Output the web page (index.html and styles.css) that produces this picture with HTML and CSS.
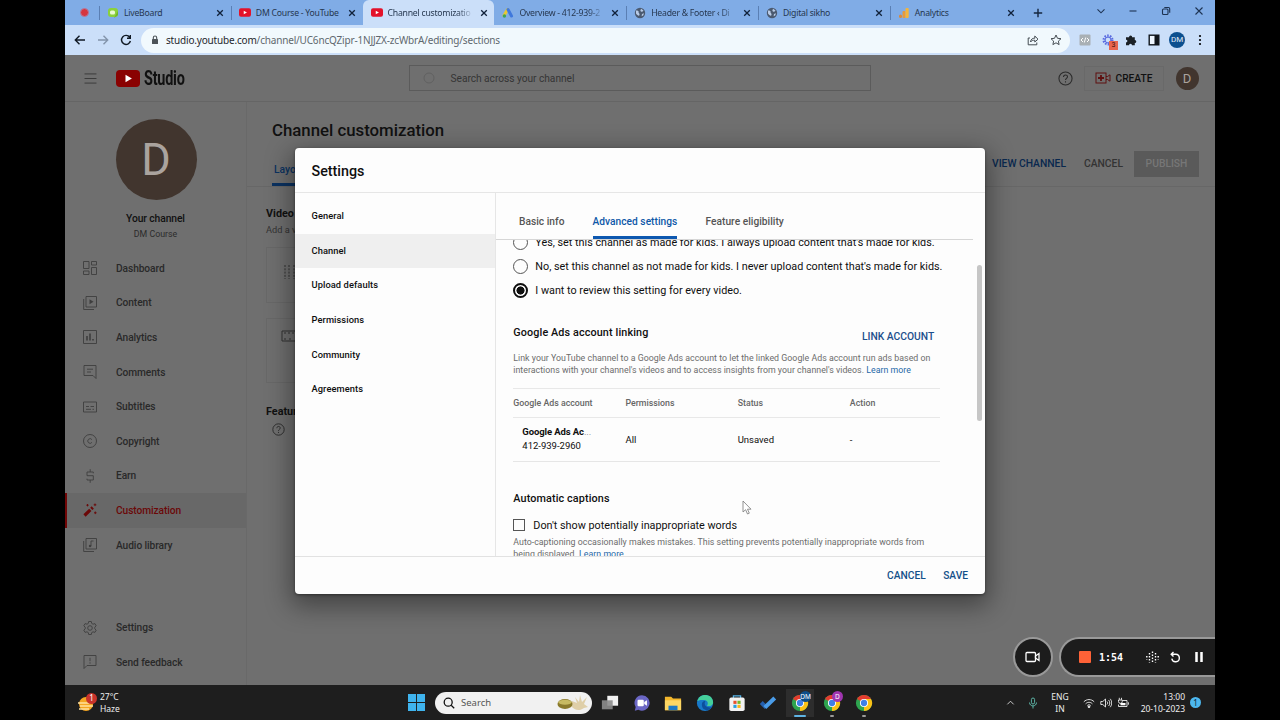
FILE: index.html
```html
<!DOCTYPE html>
<html lang="en">
<head>
  <meta charset="UTF-8">
  <meta name="viewport" content="width=device-width, initial-scale=1.0">
  <title>Channel customization - YouTube Studio</title>
  <link rel="stylesheet" href="styles.css">
</head>
<body>
  <svg class="defs" width="0" height="0">
    <symbol id="yt" viewBox="0 0 24 17"><rect width="24" height="17" rx="4"/><path d="M9.5 4.8v7.4l6.4-3.7z" class="play"/></symbol>
    <symbol id="x" viewBox="0 0 10 10"><path d="M2.2 2.2l5.6 5.6M7.8 2.2L2.2 7.8"/></symbol>
    <symbol id="globe" viewBox="0 0 12 12"><circle cx="6" cy="6" r="5.2" fill="#4b5a70"/><path d="M2 3.5c2 0 3 .6 2.600 1.600S6 6.500 5.500 8 3.500 8.500 2 6.500zM7 1.800l2.500 1.700-1.500 1.500-1.700-1zM8 7l2-.7-.8 2.200-1.600.7z" fill="#b9cbe6"/></symbol>
    <symbol id="help" viewBox="0 0 24 24"><circle cx="12" cy="12" r="10.500"/><path d="M8.800 9.600c0-4.300 6.400-4.200 6.400-.3 0 2.500-3.200 2.600-3.200 5.200M12 16.500v2"/></symbol>
    <symbol id="chrome" viewBox="0 0 20 20"><circle cx="10" cy="10" r="9" fill="#2ea44f"/><path d="M10 10L2.200 5.500A9 9 0 0 1 17.800 5.500z" fill="#e33b2e"/><path d="M10 10V5.500h7.800A9 9 0 0 1 10 19z" fill="#fbc116"/><circle cx="10" cy="10" r="4.500" fill="#fff"/><circle cx="10" cy="10" r="3.500" fill="#3f7fe8"/></symbol>
  </svg>

  <div class="screen">
    <div class="tabbar">
      <div class="pinned"><span class="rec-dot"></span></div>
      <div class="tab"><svg class="fav" viewBox="0 0 12 12"><rect x="1" y="1" width="10" height="9" rx="3" fill="#8bd13c"/><path d="M7 11l4-3V4z" fill="#6fb52a"/><rect x="3" y="3.500" width="5" height="4" rx="1.500" fill="#eaf9d2"/></svg><span class="name">LiveBoard</span><svg class="close"><use href="#x"/></svg></div>
      <div class="tab"><svg class="fav red"><use href="#yt"/></svg><span class="name">DM Course - YouTube</span><svg class="close"><use href="#x"/></svg></div>
      <div class="tab active"><svg class="fav red"><use href="#yt"/></svg><span class="name fade">Channel customizatio</span><svg class="close"><use href="#x"/></svg></div>
      <div class="tab"><svg class="fav" viewBox="0 0 12 12"><path d="M5.500 2.500L2 8.500" stroke="#e8c832" stroke-width="3" stroke-linecap="round"/><path d="M6 2.500l3.500 6.500" stroke="#3f78dc" stroke-width="3" stroke-linecap="round"/><circle cx="2.400" cy="9" r="1.700" fill="#3fa35a"/></svg><span class="name fade">Overview - 412-939-2</span><svg class="close"><use href="#x"/></svg></div>
      <div class="tab"><svg class="fav"><use href="#globe"/></svg><span class="name fade">Header &amp; Footer ‹ Di</span><svg class="close"><use href="#x"/></svg></div>
      <div class="tab"><svg class="fav"><use href="#globe"/></svg><span class="name">Digital sikho</span><svg class="close"><use href="#x"/></svg></div>
      <div class="tab"><svg class="fav" viewBox="0 0 12 12"><rect x="1" y="7.500" width="3" height="3.500" rx="1.500" fill="#d98a3c"/><rect x="4.500" y="4" width="3" height="7" rx="1" fill="#e89a3a"/><rect x="7.500" y="1" width="3.200" height="10" rx="1" fill="#f3b53c"/></svg><span class="name">Analytics</span><svg class="close"><use href="#x"/></svg></div>
      <div class="newtab"><svg viewBox="0 0 10 10"><path d="M5 .8v8.400M.8 5h8.400"/></svg></div>
      <div class="winctl">
        <svg viewBox="0 0 10 10"><path d="M1.500 3.300L5 6.800l3.500-3.500"/></svg>
        <svg viewBox="0 0 10 10"><path d="M1.500 5h7"/></svg>
        <svg viewBox="0 0 10 10"><rect x="1.500" y="3" width="5.500" height="5.500" rx="1"/><path d="M3.300 1.500H7.500q1.200 0 1.200 1.200v4"/></svg>
        <svg viewBox="0 0 10 10"><path d="M1.500 1.500l7 7M8.500 1.500l-7 7"/></svg>
      </div>
    </div>

    <div class="toolbar">
      <div class="navs">
        <svg viewBox="0 0 12 12"><path d="M11 6H1.500M5.500 1.800L1.300 6l4.200 4.200"/></svg>
        <svg viewBox="0 0 12 12" class="off"><path d="M1 6h9.500M6.500 1.800L10.700 6l-4.200 4.200"/></svg>
        <svg viewBox="0 0 12 12"><path d="M9.700 3.300A4.500 4.500 0 1 0 10.400 7M10.300 1v3.200H7"/></svg>
      </div>
      <div class="omnibox">
        <svg class="lock" viewBox="0 0 8 10"><rect x="1" y="4" width="6" height="5" rx=".6" fill="#4c5358"/><path d="M2.300 4V2.700a1.700 1.700 0 0 1 3.400 0V4" fill="none" stroke="#4c5358" stroke-width="1.100"/></svg>
        <span class="url"><b>studio.youtube.com</b>/channel/UC6ncQZipr-1NJJZX-zcWbrA/editing/sections</span>
        <svg class="omni-icon" viewBox="0 0 12 12"><path d="M3 4H1.200v6.800h8.600V8.500M3.500 8c.3-2.800 2-3.800 4.300-3.800V2L11 5.200 7.800 8V6.200C6 6.200 4.500 6.600 3.500 8z"/></svg>
        <svg class="omni-icon" viewBox="0 0 12 12"><path d="M6 1l1.500 3.300 3.500.4-2.600 2.400.7 3.500L6 8.800l-3.100 1.800.7-3.500L1 4.700l3.500-.4z"/></svg>
      </div>
      <div class="exts">
        <svg viewBox="0 0 12 12"><rect x=".5" y=".5" width="11" height="11" rx="1" fill="#a9b0b5"/><path d="M4 4L2 6l2 2M8 4l2 2-2 2M6.700 3.500l-1.400 5" stroke="#fff" fill="none"/></svg>
        <span class="gear"><svg viewBox="0 0 12 12"><circle cx="6" cy="6" r="4.200" fill="none" stroke="#5a6be0" stroke-width="2.600" stroke-dasharray="1.500 1.140"/><circle cx="6" cy="6" r="2.900" fill="none" stroke="#5a6be0"/></svg><i>3</i></span>
        <svg viewBox="0 0 12 12"><path d="M1 3.200h3a1.600 1.600 0 1 1 3.200 0h2.600V6a1.500 1.500 0 1 1 0 3v2.200H7a1.500 1.500 0 0 0-3 0H1V8.500a1.400 1.400 0 0 0 0-2.800z" fill="#1c2126"/></svg>
        <svg viewBox="0 0 12 12"><rect x="1.200" y="1.200" width="9.600" height="9.600" fill="#eef6ff" stroke="#10161c" stroke-width="1.400"/><rect x="6.500" y="1" width="4.300" height="10" fill="#10161c"/></svg>
        <span class="profile">DM</span>
        <svg viewBox="0 0 12 12"><circle cx="6" cy="2" r="1.100"/><circle cx="6" cy="6" r="1.100"/><circle cx="6" cy="10" r="1.100"/></svg>
      </div>
    </div>

    <div class="page">
      <header class="studio-head">
        <svg class="burger" viewBox="0 0 14 12"><path d="M.5 1h13M.5 6h13M.5 11h13"/></svg>
        <svg class="logo"><use href="#yt"/></svg>
        <span class="brand">Studio</span>
        <div class="search"><svg viewBox="0 0 12 12"><circle cx="6" cy="6" r="5"/></svg>Search across your channel</div>
        <svg class="help"><use href="#help"/></svg>
        <div class="create"><svg viewBox="0 0 16 12"><rect x="1" y="1" width="10" height="10"/><path d="M6 3v6M3 6h6" stroke-width="1.800"/><path d="M11 4.500h1.500L15 2.800v6.400l-2.500-1.700H11"/></svg>CREATE</div>
        <div class="avatar small">D</div>
      </header>

      <div class="cols">
        <aside class="sidebar">
          <div class="avatar big">D</div>
          <div class="your">Your channel</div>
          <div class="course">DM Course</div>
          <nav>
            <div class="item"><svg viewBox="0 0 14 14"><path d="M.5.5h5.500v7H.5zM8.500.5h5v3.500h-5zM8.500 6.500h5v7h-5zM.5 10h5.500v3.500H.5z"/></svg>Dashboard</div>
            <div class="item"><svg viewBox="0 0 14 14"><path d="M3 .5h10.500V11H3zM.7 3v10.500H11"/><path d="M6.500 3.300v5l4-2.500z" class="fill"/></svg>Content</div>
            <div class="item"><svg viewBox="0 0 14 14"><path d="M.5.5h13v13H.5z"/><path d="M4 10.500V6M7 10.500v-7M10 10.500V9" stroke-width="1.600"/></svg>Analytics</div>
            <div class="item"><svg viewBox="0 0 14 14"><path d="M1 .5h12v13l-3-3H1zM4 4.200h6M4 7h4"/></svg>Comments</div>
            <div class="item"><svg viewBox="0 0 14 14"><path d="M.5 2h13v10H.5zM3 6.500h3M7.500 6.500H11M3 9.300h5M9.500 9.300H11"/></svg>Subtitles</div>
            <div class="item"><svg viewBox="0 0 14 14"><circle cx="7" cy="7" r="6.500"/><path d="M8.900 5.600a2.300 2.300 0 1 0 0 2.800"/></svg>Copyright</div>
            <div class="item"><svg viewBox="0 0 14 14"><path d="M10.300 4.300V3H4v3.700h6.300V11H4V9.700M7.200 .2v2.800M7.200 11v2.800"/></svg>Earn</div>
            <div class="item current"><svg viewBox="0 0 14 14"><path d="M1.500 12.500L7.300 6.900M8.300 5.900l1.500-1.400" stroke-width="3.200"/><path d="M4.500 1v2.400M3.300 2.200h2.400M12 .5v2.600M10.700 1.800h2.600M12.300 8.500v2.600M11 9.800h2.600"/></svg>Customization</div>
            <div class="item"><svg viewBox="0 0 14 14"><path d="M3 .5h10.500V11H3zM.7 3v10.500H11M8 8.200V3h2.500"/><circle cx="7" cy="8" r="1.200" class="fill"/></svg>Audio library</div>
          </nav>
          <nav class="lower">
            <div class="item"><svg viewBox="0 0 14 14"><circle cx="7" cy="7" r="2.300"/><path d="M5.700.5h2.600l.4 1.900 1.300.8 1.900-.6 1.300 2.200L11.800 6.200v1.600l1.400 1.400-1.300 2.200-1.900-.6-1.300.8-.4 1.900H5.700l-.4-1.900-1.300-.8-1.900.6L.8 9.200l1.400-1.400V6.200L.8 4.800l1.300-2.200 1.900.6 1.300-.8z"/></svg>Settings</div>
            <div class="item"><svg viewBox="0 0 14 14"><path d="M1 13.500V.5h12v10H4zM7 2.800v3.400M7 7.300v1.400"/></svg>Send feedback</div>
          </nav>
        </aside>

        <main class="content">
          <h1>Channel customization</h1>
          <div class="bar">
            <span class="layout">Layout</span>
            <span class="view">VIEW CHANNEL</span>
            <span class="cancel">CANCEL</span>
            <span class="publish">PUBLISH</span>
          </div>
          <h2>Video</h2>
          <p>Add a video</p>
          <div class="card"><svg viewBox="0 0 16 16"><path d="M4 1v14M8 1v14M13 1v14" stroke-dasharray="2 1.300"/></svg></div>
          <div class="card second"><svg viewBox="0 0 16 16"><path d="M1 3h14v10H1zM3 5h2M7 5h2M11 5h2M3 11h2M8 11h2"/></svg></div>
          <h2 class="featured">Featured</h2>
          <svg class="help"><use href="#help"/></svg>
        </main>
      </div>
    </div>

    <div class="taskbar">
      <div class="weather">
        <svg viewBox="0 0 20 20"><circle cx="9" cy="11" r="7" fill="#f5a623"/><path d="M1 10h12M3 13h13M2 16h10" stroke="#ffe1a0" stroke-width="1.300"/><circle cx="14.500" cy="5.500" r="5.500" fill="#c8332b"/><text x="12.300" y="8.400">1</text></svg>
        <div>27°C<br>Haze</div>
      </div>
      <svg class="start" viewBox="0 0 18 18"><path d="M0 0h8.500v8.500H0zM9.500 0H18v8.500H9.500zM0 9.500h8.500V18H0zM9.500 9.500H18V18H9.500z" fill="#3fb4ee"/></svg>
      <div class="find">
        <svg class="glass" viewBox="0 0 12 12"><circle cx="5.200" cy="5.200" r="4"/><path d="M8.200 8.200l3 3"/></svg>
        <span>Search</span>
        <svg class="bowl" viewBox="0 0 32 18"><path d="M14 12c4 5 9 5 13 2l4-1-4-3 3-7-5 5-2-7-1 7-4-5 2 6-5-2z" fill="#dfcfa8"/><ellipse cx="8" cy="10" rx="7.500" ry="5" fill="#8a7a2c"/><ellipse cx="8" cy="8.300" rx="6.500" ry="2.500" fill="#c7ba62"/></svg>
      </div>
      <div class="apps">
        <svg viewBox="0 0 20 20"><rect x="7" y="2" width="12" height="11" fill="#f1f1f1"/><rect x="1" y="7" width="12" height="10" fill="#8c8c8c" opacity=".9"/></svg>
        <svg viewBox="0 0 20 20"><path d="M10 1.500a8.500 8.500 0 1 1-4 16L2 18.500l1-4A8.500 8.500 0 0 1 10 1.500z" fill="#6a66c4"/><rect x="5" y="6.500" width="7" height="7" rx="1.300" fill="#fff"/><path d="M12.500 9l3-2v6l-3-2z" fill="#fff"/></svg>
        <svg viewBox="0 0 20 20"><path d="M1 3h7l2 2h9v13H1z" fill="#f3b72d"/><path d="M1 7h18v11H1z" fill="#fcd663"/><path d="M5 18v-5h10v5z" fill="#1c78c4"/></svg>
        <svg viewBox="0 0 20 20"><circle cx="10" cy="10" r="9" fill="#1879c9"/><path d="M1.500 8C3 2 8 .8 11.500 1.200 17 2 19.200 6 19 10c-.3 3-4 4.200-6.800 3 2-2.500.6-6-3-6.300C5.500 6.300 3 7 1.500 8z" fill="#45cf9a"/><path d="M6.500 12c0-3 2-4.500 4-4-1.500 1.500-1.300 6 3.500 6.800 2 .3 3-.1 3.700-.6-2 4-6.700 4.500-8.700 2.800C7.300 16 6.500 14 6.500 12z" fill="#0d4f9c"/></svg>
        <svg viewBox="0 0 20 20"><path d="M6 5V2.200h8V5" fill="none" stroke="#55b4e8" stroke-width="1.400"/><rect x="1.500" y="4" width="17" height="15" rx="2" fill="#f2f2f2"/><path d="M6 7.500h3.500V11H6z" fill="#e8502c"/><path d="M10.500 7.500H14V11h-3.500z" fill="#77b828"/><path d="M6 12h3.500v3.500H6z" fill="#29a0e0"/><path d="M10.500 12H14v3.500h-3.500z" fill="#f9b81a"/></svg>
        <svg viewBox="0 0 20 20"><path d="M2.500 9.500l5.500 5.500" stroke="#245fae" stroke-width="4.500"/><path d="M6.500 15L17.500 4.500" stroke="#4a9ce8" stroke-width="4.500"/></svg>
        <span class="app on"><svg viewBox="0 0 20 20"><use href="#chrome"/></svg><i class="dm">DM</i></span>
        <span class="app"><svg viewBox="0 0 20 20"><use href="#chrome"/></svg><i class="d">D</i></span>
        <span class="app"><svg viewBox="0 0 20 20"><use href="#chrome"/></svg></span>
      </div>
      <div class="tray">
        <svg class="up" viewBox="0 0 10 10"><path d="M1.500 6.500L5 3l3.500 3.500"/></svg>
        <svg class="mic" viewBox="0 0 10 12"><rect x="3.400" y="1" width="3.200" height="6" rx="1.600"/><path d="M1.500 5.500c0 4.500 7 4.500 7 0M5 9v2.500"/></svg>
        <div class="lang">ENG<br>IN</div>
        <svg class="wifi" viewBox="0 0 12 12"><path d="M.8 4.800c3-3 7.400-3 10.400 0M2.600 6.800c2-2 4.800-2 6.800 0M4.300 8.500c1-1 2.400-1 3.400 0"/><circle cx="6" cy="9.800" r=".9" fill="#fff"/></svg>
        <svg class="vol" viewBox="0 0 12 12"><path d="M.8 4.500v3h2L5.500 10V2L2.800 4.500zM7 4.500c.8 1 .8 2 0 3M8.600 3c1.600 2 1.600 4 0 6M10.200 1.800c2 2.600 2 5.800 0 8.400"/></svg>
        <svg class="batt" viewBox="0 0 12 12"><path d="M5.500 3.500H10v6H1.500V7.500M11.400 5.300v2.400M2.300.8v2M4.500.8v2M1.500 3h3.800v1.500a1.900 1.900 0 0 1-3.800 0z"/><rect x="3.500" y="6" width="5" height="2.300" fill="#fff" stroke="none"/></svg>
        <div class="clock">13:00<br>20-10-2023</div>
        <span class="note">1</span>
      </div>
    </div>

    <div class="modal">
      <div class="modal-head">Settings</div>
      <div class="modal-mid">
        <div class="side">
          <div>General</div>
          <div class="sel">Channel</div>
          <div>Upload defaults</div>
          <div>Permissions</div>
          <div>Community</div>
          <div>Agreements</div>
        </div>
        <div class="pane">
          <div class="tabs">
            <span class="t1">Basic info</span>
            <span class="t2">Advanced settings</span>
            <span class="t3">Feature eligibility</span>
          </div>
          <div class="scroll">
            <div class="radio r1"><i></i><span>Yes, set this channel as made for kids. I always upload content that's made for kids.</span></div>
            <div class="radio"><i></i><span>No, set this channel as not made for kids. I never upload content that's made for kids.</span></div>
            <div class="radio checked"><i></i><span>I want to review this setting for every video.</span></div>
            <div class="link-row"><h3>Google Ads account linking</h3><span class="link-btn">LINK ACCOUNT</span></div>
            <p class="note-text">Link your YouTube channel to a Google Ads account to let the linked Google Ads account run ads based on<br>interactions with your channel's videos and to access insights from your channel's videos. <a>Learn more</a></p>
            <div class="grid head"><span>Google Ads account</span><span>Permissions</span><span>Status</span><span>Action</span></div>
            <div class="grid row"><span class="acct"><b>Google Ads Ac<em>...</em></b>412-939-2960</span><span>All</span><span>Unsaved</span><span>-</span></div>
            <h3 class="auto">Automatic captions</h3>
            <div class="check"><i></i><span>Don't show potentially inappropriate words</span></div>
            <p class="note-text">Auto-captioning occasionally makes mistakes. This setting prevents potentially inappropriate words from<br>being displayed. <a>Learn more</a></p>
            <div class="thumb"></div>
          </div>
        </div>
      </div>
      <div class="modal-foot"><span>CANCEL</span><span>SAVE</span></div>
    </div>

    <svg class="cursor" viewBox="0 0 10 15"><path d="M1 1v11l2.600-2.300L5.500 14l1.800-.8-1.800-4H9z"/></svg>

    <div class="cam"><svg viewBox="0 0 16 12"><rect x="1" y="1.500" width="9.500" height="9" rx="1"/><path d="M10.500 5l3.500-2.500v7L10.500 7z"/></svg></div>
    <div class="recorder">
      <span class="stop"></span>
      <span class="time">1:54</span>
      <svg class="dots" viewBox="0 0 13 13"><path d="M3.500 2v9.500M6.500 .5v12M9.500 2v9.500M.8 5v3.500M12.200 5v3.500"/></svg>
      <svg class="redo" viewBox="0 0 12 12"><path d="M2.500 3.200h4.200a3.800 3.800 0 1 1-3.900 4.500M4.500 1L2.200 3.200 4.500 5.500"/></svg>
      <svg class="pause" viewBox="0 0 10 12"><path d="M2.500 1v10M7.500 1v10"/></svg>
    </div>
  </div>
</body>
</html>
```

FILE: styles.css
```css
* {
  box-sizing: border-box;
}
body {
  margin: 0;
  background: #000;
  font-family: Roboto, "Liberation Sans", sans-serif;
  overflow: hidden;
}
.defs {
  position: absolute;
}
svg {
  flex: none;
  display: block;
}
i, em {
  font-style: normal;
}
.play {
  fill: #fff;
}
.screen {
  position: relative;
  width: 1150px;
  height: 720px;
  margin-left: 65px;
  display: flex;
  flex-direction: column;
  overflow: hidden;
}

/* browser tabs */
.tabbar {
  height: 25px;
  display: flex;
  align-items: center;
  background: #80ace6;
  font-family: "Noto Sans", sans-serif;
  font-size: 8.700px;
  letter-spacing: -.25px;
  color: #26374f;
}
.pinned {
  width: 34px;
  padding-left: 15px;
}
.rec-dot {
  display: block;
  width: 9px;
  height: 9px;
  border-radius: 50%;
  background: #d6353f;
  border: 1px solid #b77a9c;
}
.tab {
  width: 131.8px;
  height: 25px;
  display: flex;
  align-items: center;
  padding-left: 8px;
  position: relative;
}
.tab::before {
  content: "";
  position: absolute;
  left: 0;
  top: 6px;
  width: 1px;
  height: 14px;
  background: #5a7fb4;
}
.tab.active::before, .tab.active + .tab::before {
  display: none;
}
.fav {
  width: 12px;
  height: 12px;
  fill: none;
}
.fav.red {
  fill: #e3122a;
  height: 9px;
}
.name {
  width: 87px;
  margin-left: 5px;
  white-space: nowrap;
}
.fade {
  mask-image: linear-gradient(90deg, #000 80%, transparent 98%);
}
.close {
  width: 10px;
  height: 10px;
  margin-left: 4px;
  stroke: #10213a;
  stroke-width: 1.3;
}
.tab.active {
  background: #cbdff9;
  border-radius: 6px 6px 0 0;
}
.newtab {
  width: 32px;
  padding-left: 11px;
}
.newtab svg {
  width: 10px;
  stroke: #14263f;
  stroke-width: 1.4;
}
.winctl {
  display: flex;
  gap: 22.700px;
  margin: -4px 0 0 42px;
}
.winctl svg {
  width: 10px;
  height: 10px;
  fill: none;
  stroke: #1d3352;
  stroke-width: 1.1;
}

/* address bar */
.toolbar {
  height: 30px;
  display: flex;
  align-items: center;
  background: #cbdff9;
}
.navs {
  width: 76px;
  padding-left: 9px;
  display: flex;
  gap: 11px;
}
.navs svg {
  width: 12px;
  fill: none;
  stroke: #101923;
  stroke-width: 1.4;
}
.navs .off {
  stroke: #8394ab;
}
.omnibox {
  width: 929px;
  height: 25px;
  border-radius: 13px;
  background: #f1f9fd;
  display: flex;
  align-items: center;
  padding: 0 8px 0 10px;
}
.lock {
  width: 8px;
  height: 10px;
}
.url {
  flex: 1;
  margin-left: 7px;
  font-family: "Noto Sans", sans-serif;
  font-size: 10px;
  letter-spacing: -.18px;
  color: #5f686e;
}
.url b {
  font-weight: 400;
  color: #1f272c;
}
.omni-icon {
  width: 12px;
  margin-left: 11px;
  fill: none;
  stroke: #454d53;
}
.exts {
  display: flex;
  align-items: center;
  gap: 11px;
  margin-left: 9px;
}
.exts svg {
  width: 12px;
  height: 12px;
}
.gear {
  position: relative;
}
.gear i {
  position: absolute;
  left: 7px;
  top: 7px;
  width: 9px;
  height: 9px;
  background: #e8654f;
  color: #38130f;
  font-size: 7px;
  line-height: 9px;
  text-align: center;
}
.profile {
  width: 16px;
  height: 16px;
  margin: 0 -2px;
  border-radius: 50%;
  background: #0b4f8f;
  color: #e2edf7;
  font-size: 8px;
  line-height: 16px;
  text-align: center;
}

/* dimmed studio page */
.page {
  height: 630px;
  background: #6f6f6f;
  color: #111;
}
.studio-head {
  height: 47px;
  display: flex;
  align-items: center;
  border-bottom: 1px solid #656565;
}
.burger {
  width: 13px;
  height: 11px;
  margin-left: 18.500px;
  stroke: #373737;
}
.logo {
  width: 24px;
  height: 17px;
  margin-left: 19px;
  fill: #8a0202;
}
.logo + .brand {
  width: 42px;
  margin-left: 4px;
  font-weight: 700;
  font-size: 19.500px;
  letter-spacing: -.3px;
  transform: scaleX(.74);
  transform-origin: left;
}
.search {
  width: 462px;
  height: 26px;
  margin-left: 223px;
  border: 1px solid #5b5b5b;
  display: flex;
  align-items: center;
  font-size: 10.200px;
  letter-spacing: -.03px;
  color: #353535;
}
.search svg {
  width: 12px;
  margin: 0 16px 0 13px;
  fill: none;
  stroke: #616161;
}
.help {
  width: 15px;
  height: 15px;
  fill: none;
  stroke: #2b2b2b;
  stroke-width: 1.7;
}
.studio-head .help {
  margin-left: 187px;
}
.create {
  width: 80px;
  height: 25px;
  margin-left: 11px;
  border: 1px solid #696969;
  display: flex;
  align-items: center;
  justify-content: center;
  gap: 5px;
  font-size: 10.200px;
  font-weight: 500;
}
.create svg {
  width: 16px;
  fill: none;
  stroke: #5f1010;
}
.avatar {
  border-radius: 50%;
  background: #41352e;
  color: #aaa39e;
  text-align: center;
}
.small {
  width: 23px;
  height: 23px;
  margin-left: 12px;
  font-size: 13px;
  line-height: 23px;
}
.cols {
  display: flex;
  height: 583px;
}
.sidebar {
  width: 182px;
  border-right: 1px solid #696969;
  font-weight: 500;
}
.big {
  width: 81px;
  height: 81px;
  margin: 16.500px 0 0 50.500px;
  font-size: 45px;
  font-weight: 400;
  line-height: 81px;
}
.your {
  margin-top: 12.500px;
  text-align: center;
  font-size: 10.300px;
  line-height: 14px;
  letter-spacing: -.1px;
}
.course {
  margin-top: 2px;
  text-align: center;
  font-size: 8.800px;
  line-height: 12px;
  font-weight: 400;
  color: #2c2c2c;
}
.sidebar nav {
  margin-top: 11px;
}
.item {
  height: 34.600px;
  display: flex;
  align-items: center;
  gap: 19px;
  padding-left: 18px;
  font-size: 10.200px;
  letter-spacing: -.08px;
  color: #292929;
}
.item svg {
  width: 14px;
  height: 14px;
  fill: none;
  stroke: #3e3e3e;
  stroke-width: .9;
}
.item .fill {
  fill: #3e3e3e;
  stroke: none;
}
.item.current {
  background: #686868;
  border-left: 2px solid #700606;
  padding-left: 16px;
  color: #6b0808;
}
.item.current svg {
  stroke: #6b0808;
}
.sidebar .lower {
  margin-top: 48px;
}
.content {
  flex: 1;
}
h1 {
  margin: 18px 0 0 25px;
  font-size: 16.800px;
  line-height: 20px;
  font-weight: 500;
}
.bar {
  height: 47px;
  display: flex;
  align-items: center;
  padding-top: 1px;
  border-bottom: 1px solid #676767;
  font-size: 10.3px;
  font-weight: 500;
}
.layout {
  width: 60px;
  height: 100%;
  margin-left: 25px;
  padding: 22px 0 0 2px;
  border-bottom: 3px solid #0b3261;
  color: #0b3261;
}
.view {
  width: 92px;
  margin-left: 660px;
  color: #09284e;
}
.cancel {
  width: 50px;
  color: #333;
}
.publish {
  width: 65px;
  height: 26px;
  line-height: 26px;
  text-align: center;
  background: #5a5a5a;
  color: #777;
}
h2 {
  margin: 19.500px 0 0 19px;
  font-size: 10.800px;
  line-height: 14px;
  font-weight: 700;
}
.content p {
  margin: 3px 0 0 19px;
  font-size: 9.200px;
  line-height: 12px;
  color: #333;
}
.card {
  width: 700px;
  height: 56px;
  margin: 11px 0 0 19px;
  border: 1px solid #686868;
  padding: 16px 0 0 14px;
}
.card svg {
  width: 16px;
  height: 16px;
  fill: none;
  stroke: #333;
}
.card.second {
  height: 65px;
  margin-top: 15px;
  padding-top: 9px;
}
.featured {
  margin-top: 22px;
}
.content .help {
  width: 13px;
  height: 13px;
  margin: 4px 0 0 25px;
}

/* settings dialog */
.modal {
  position: absolute;
  left: 229.500px;
  top: 147.500px;
  width: 690.500px;
  height: 446px;
  border-radius: 4px;
  background: #fdfdfd;
  box-shadow: 0 8px 26px 4px rgba(0, 0, 0, .4), 0 1px 3px rgba(0, 0, 0, .4);
  color: #0f0f0f;
  display: flex;
  flex-direction: column;
}
.modal-head {
  height: 45.500px;
  padding-left: 17px;
  line-height: 47px;
  font-size: 14.300px;
  font-weight: 500;
  border-bottom: 1px solid #e6e6e6;
}
.modal-mid {
  height: 363px;
  display: flex;
}
.side {
  width: 201.500px;
  padding-top: 6.300px;
  border-right: 1px solid #e6e6e6;
  font-size: 9.300px;
  font-weight: 500;
  letter-spacing: .08px;
}
.side div {
  height: 34.600px;
  line-height: 34.600px;
  padding-left: 17px;
}
.side .sel {
  background: #efefef;
}
.pane {
  flex: 1;
  display: flex;
  flex-direction: column;
}
.tabs {
  height: 47px;
  width: 477px;
  display: flex;
  padding-left: 23px;
  border-bottom: 1px solid #d6d6d6;
  line-height: 57px;
  font-size: 10.200px;
  font-weight: 500;
  letter-spacing: .02px;
  color: #555;
}
.t1 {
  width: 73.500px;
}
.t2 {
  width: 84px;
  margin-right: 29px;
  border-bottom: 3px solid #0d58b0;
  color: #0d58a8;
  white-space: nowrap;
}
.scroll {
  position: relative;
  flex: 1;
  overflow: hidden;
  padding-left: 17.300px;
}
.radio {
  height: 24.400px;
  display: flex;
  align-items: center;
  gap: 7px;
  font-size: 10.800px;
  white-space: nowrap;
}
.r1 {
  margin-top: -10.200px;
}
.radio i {
  width: 15px;
  height: 15px;
  border: 1.5px solid #555;
  border-radius: 50%;
}
.radio.checked i {
  border-color: #0f0f0f;
  background: radial-gradient(#0f0f0f 3.800px, transparent 4.300px);
  border-width: 2px;
}
.link-row {
  display: flex;
  justify-content: space-between;
  width: 421px;
  margin-top: 22.500px;
}
h3 {
  margin: 0;
  font-size: 10.800px;
  line-height: 16px;
  font-weight: 500;
  letter-spacing: .12px;
}
.link-btn {
  padding-top: 4px;
  font-size: 10.300px;
  line-height: 16px;
  font-weight: 500;
  color: #1c4f8c;
}
.note-text {
  margin: 8px 0 0;
  font-size: 8.800px;
  letter-spacing: .02px;
  line-height: 11.700px;
  color: #6c6c6c;
  white-space: nowrap;
}
.note-text a {
  color: #1f69a8;
}
.grid {
  width: 427px;
  display: grid;
  grid-template-columns: 112.200px 112.200px 112.200px 1fr;
  align-items: center;
}
.head {
  height: 30px;
  margin-top: 11px;
  border-top: 1px solid #e8e8e8;
  border-bottom: 1px solid #e8e8e8;
  font-size: 8.800px;
  font-weight: 500;
  color: #666;
}
.row {
  height: 44px;
  border-bottom: 1px solid #e6e6e6;
  font-size: 9.500px;
}
.acct {
  padding-left: 9px;
  line-height: 14px;
}
.acct b {
  display: block;
  letter-spacing: -.1px;
}
.acct em {
  font-weight: 400;
  color: #888;
}
.auto {
  margin-top: 29.500px;
}
.check {
  height: 20px;
  margin-top: 8px;
  display: flex;
  align-items: center;
  gap: 8px;
  font-size: 10.800px;
}
.check i {
  width: 12px;
  height: 12px;
  border: 1.5px solid #555;
}
.check + .note-text {
  margin-top: 1.500px;
}
.thumb {
  position: absolute;
  right: 3px;
  top: 25px;
  width: 5px;
  height: 156px;
  border-radius: 3px;
  background: #c6c6c6;
}
.modal-foot {
  flex: 1;
  display: flex;
  justify-content: flex-end;
  gap: 17.500px;
  align-items: center;
  padding-right: 17px;
  border-top: 1px solid #e2e2e2;
  font-size: 10.200px;
  font-weight: 500;
  color: #145089;
}
.cursor {
  position: absolute;
  left: 677px;
  top: 500px;
  width: 10px;
  height: 15px;
  fill: #fff;
  stroke: #777;
  stroke-width: .8;
}

/* screen recorder */
.cam {
  position: absolute;
  left: 948px;
  top: 637px;
  width: 40px;
  height: 40px;
  border: 2px solid #999;
  border-radius: 50%;
  background: #1c1c1c;
  display: flex;
  align-items: center;
  justify-content: center;
}
.cam svg {
  width: 16px;
  fill: none;
  stroke: #fff;
  stroke-width: 1.3;
}
.recorder {
  position: absolute;
  left: 994px;
  top: 637px;
  width: 160px;
  height: 40px;
  border: 2px solid #999;
  border-right: 0;
  border-radius: 20px 0 0 20px;
  background: #1c1c1c;
  display: flex;
  align-items: center;
  padding-left: 18px;
}
.stop {
  width: 12px;
  height: 12px;
  border-radius: 1px;
  background: #ff6237;
}
.time {
  width: 38px;
  margin-left: 8px;
  color: #fff;
  font: bold 10px "DejaVu Sans Mono", monospace;
}
.recorder svg {
  fill: none;
  stroke: #fff;
  stroke-width: 1.4;
}
.dots {
  width: 13px;
  margin-left: 9px;
  stroke-dasharray: 1.5 1.5;
}
.redo {
  width: 12px;
  margin-left: 10px;
}
.recorder .pause {
  width: 10px;
  margin-left: 12.500px;
  stroke-width: 2.500;
}

/* windows taskbar */
.taskbar {
  height: 35px;
  background: #1e1e1e;
  color: #eee;
  display: flex;
  align-items: center;
  font-family: "Noto Sans", sans-serif;
  font-size: 8.500px;
  line-height: 11.500px;
}
.weather {
  width: 343px;
  padding-left: 12px;
  display: flex;
  gap: 3px;
  align-items: center;
}
.weather svg {
  width: 20px;
  height: 20px;
}
.weather text {
  font-size: 8px;
  fill: #fff;
}
.start {
  width: 17px;
  height: 17px;
}
.find {
  width: 157px;
  height: 22px;
  margin-left: 10px;
  border-radius: 11px;
  background: #f1f1f1;
  color: #555;
  font-size: 9.500px;
  display: flex;
  align-items: center;
  padding: 0 3px 0 8px;
}
.find span {
  flex: 1;
  margin-left: 6px;
}
.glass {
  width: 12px;
  fill: none;
  stroke: #111;
  stroke-width: 1.3;
}
.bowl {
  width: 32px;
  height: 18px;
}
.apps {
  display: flex;
  gap: 13.700px;
  margin-left: 9px;
}
.apps svg {
  width: 18px;
  height: 18px;
  fill: none;
}
.app {
  position: relative;
}
.app::after {
  content: "";
  position: absolute;
  left: 7px;
  bottom: -5px;
  width: 4px;
  height: 2px;
  border-radius: 1px;
  background: #9a9a9a;
}
.app.on::before {
  content: "";
  position: absolute;
  inset: -5px;
  background: #2d2d2d;
  z-index: -1;
}
.app.on {
  z-index: 0;
}
.app.on::after {
  left: 3px;
  width: 12px;
  background: #5fb4e4;
}
.app i {
  position: absolute;
  top: -3px;
  width: 11px;
  height: 11px;
  border-radius: 50%;
  color: #fff;
  font-size: 6.500px;
  line-height: 11px;
  text-align: center;
}
.dm {
  left: 9px;
  background: #0d4f8a;
}
.d {
  left: 9px;
  background: #a035b0;
}
.tray {
  flex: 1;
  display: flex;
  align-items: center;
  justify-content: flex-end;
  padding-right: 14px;
}
.tray svg {
  height: 12px;
  fill: none;
  stroke: #eee;
  stroke-width: .9;
}
.tray .up {
  width: 9px;
  margin-right: 13px;
}
.tray .mic {
  width: 10px;
  stroke: #62c2b2;
}
.lang {
  width: 44px;
  text-align: center;
}
.wifi, .vol {
  width: 12px;
  margin-right: 5px;
}
.wifi {
  margin-left: 1px;
}
.batt {
  width: 12px;
}
.clock {
  width: 56px;
  text-align: right;
}
.note {
  width: 11px;
  height: 11px;
  margin-left: 5px;
  border-radius: 50%;
  background: #4db8ef;
  color: #123;
  font-size: 8px;
  line-height: 11px;
  text-align: center;
}
```
